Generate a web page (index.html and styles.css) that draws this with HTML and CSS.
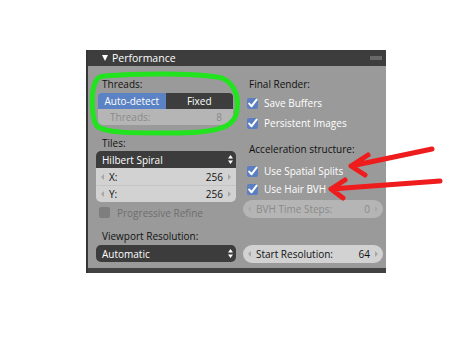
FILE: index.html
```html
<!DOCTYPE html>
<html>
<head>
<meta charset="utf-8">
<link rel="stylesheet" href="styles.css">
</head>
<body>
<div class="page">
  <div class="panel">
    <div class="header">
      <span class="tri"></span>
      <span class="title">Performance</span>
      <span class="grip"></span>
    </div>
    <div class="body">
      <div class="col">
        <div class="lbl mt11">Threads:</div>
        <div class="threads">
          <div class="toggle mt2">
            <div class="tg on">Auto-detect</div>
            <div class="tg">Fixed</div>
          </div>
          <div class="num dis bot">
            <span class="name">Threads:</span>
            <span class="val">8</span>
          </div>
        </div>
        <div class="lbl mt11">Tiles:</div>
        <div class="stack mt1">
          <div class="drop top">
            <span class="name">Hilbert Spiral</span>
            <svg class="ud" width="5" height="9" viewBox="0 0 5 9"><path d="M0 3.5 L2.5 0 L5 3.5 Z M0 5.5 L2.5 9 L5 5.5 Z" fill="#fff"/></svg>
          </div>
          <div class="num mid">
            <span class="arr l"></span><span class="name">X:</span><span class="val">256</span><span class="arr r"></span>
          </div>
          <div class="num bot sep">
            <span class="arr l"></span><span class="name">Y:</span><span class="val">256</span><span class="arr r"></span>
          </div>
        </div>
        <div class="check dis prog mt3 h15">
          <span class="box"></span><span>Progressive Refine</span>
        </div>
        <div class="lbl mt9">Viewport Resolution:</div>
        <div class="drop round mt2 h18">
          <span class="name">Automatic</span>
          <svg class="ud" width="5" height="9" viewBox="0 0 5 9"><path d="M0 3.5 L2.5 0 L5 3.5 Z M0 5.5 L2.5 9 L5 5.5 Z" fill="#fff"/></svg>
        </div>
      </div>
      <div class="col">
        <div class="lbl mt11">Final Render:</div>
        <div class="check mt2 h20">
          <span class="box on"><svg width="11" height="11" viewBox="0 0 11 11"><path d="M2.2 5.6 L4.6 8.2 L9.6 1.6" fill="none" stroke="#fff" stroke-width="2" stroke-linecap="round" stroke-linejoin="round"/></svg></span><span>Save Buffers</span>
        </div>
        <div class="check h20">
          <span class="box on"><svg width="11" height="11" viewBox="0 0 11 11"><path d="M2.2 5.6 L4.6 8.2 L9.6 1.6" fill="none" stroke="#fff" stroke-width="2" stroke-linecap="round" stroke-linejoin="round"/></svg></span><span>Persistent Images</span>
        </div>
        <div class="lbl mt9">Acceleration structure:</div>
        <div class="check mt6 h18">
          <span class="box on"><svg width="11" height="11" viewBox="0 0 11 11"><path d="M2.2 5.6 L4.6 8.2 L9.6 1.6" fill="none" stroke="#fff" stroke-width="2" stroke-linecap="round" stroke-linejoin="round"/></svg></span><span>Use Spatial Splits</span>
        </div>
        <div class="check h18">
          <span class="box on"><svg width="11" height="11" viewBox="0 0 11 11"><path d="M2.2 5.6 L4.6 8.2 L9.6 1.6" fill="none" stroke="#fff" stroke-width="2" stroke-linecap="round" stroke-linejoin="round"/></svg></span><span>Use Hair BVH</span>
        </div>
        <div class="num dis round mt2">
          <span class="arr l"></span><span class="name">BVH Time Steps:</span><span class="val">0</span><span class="arr r"></span>
        </div>
        <div class="num round mt27">
          <span class="arr l"></span><span class="name">Start Resolution:</span><span class="val">64</span><span class="arr r"></span>
        </div>
      </div>
    </div>
    <div class="footer"></div>
  </div>
  <svg class="marks" width="474" height="351" viewBox="0 0 474 351">
    <path d="M104 76 C140 73 200 73 222 78 C236 84 240 100 236 115 C232 128 215 133 170 133 C130 133 105 133 97 126 C91 118 91 92 95 83 C97 78 100 76 104 76 Z" fill="none" stroke="#22e41e" stroke-width="5"/>
    <path d="M432 149 L351 166 M368 155 L351 166 L365 175" fill="none" stroke="#ee1c1c" stroke-width="5" stroke-linecap="round" stroke-linejoin="round"/>
    <path d="M440 181 L331 189 M345 180 L331 189 L343 198" fill="none" stroke="#ee1c1c" stroke-width="5" stroke-linecap="round" stroke-linejoin="round"/>
  </svg>
</div>
</body>
</html>
```

FILE: styles.css
```css
body {
  margin: 0;
  background: #fff;
  font-family: "Open Sans", "Noto Sans", sans-serif;
  font-size: 10px;
}

.page {
  position: relative;
  width: 474px;
  height: 351px;
  padding-top: 50px;
  box-sizing: border-box;
}

.panel {
  margin-left: 86px;
  width: 300px;
  box-sizing: border-box;
  border-left: 2px solid #353535;
  background: #9a9a9a;
}

.header {
  height: 16px;
  background: #3d3d3d;
  display: flex;
  align-items: center;
  padding-left: 14px;
  color: #fff;
  font-size: 10.5px;
}

.tri {
  width: 0;
  height: 0;
  border-left: 3.5px solid transparent;
  border-right: 3.5px solid transparent;
  border-top: 6px solid #fff;
  margin-right: 4px;
}

.title {
  flex: 1;
}

.grip {
  width: 12px;
  height: 4px;
  margin-right: 4px;
  background-image: radial-gradient(circle, #6a6a6a 0.7px, transparent 0.9px);
  background-size: 2px 2px;
}

.body {
  display: grid;
  grid-template-columns: 140px 140px;
  column-gap: 7px;
  padding-left: 8px;
  height: 202px;
}

.footer {
  height: 5px;
  background: #424242;
}

.col {
  display: flex;
  flex-direction: column;
}

.mt1 { margin-top: 1px; }
.mt2 { margin-top: 2px; }
.mt3 { margin-top: 3px; }
.mt6 { margin-top: 6px; }
.mt9 { margin-top: 9px; }
.mt11 { margin-top: 11px; }
.mt27 { margin-top: 27px; }
.h15 { height: 15px; }
.h18 { height: 18px; }
.h20 { height: 20px; }

.lbl {
  height: 14px;
  line-height: 14px;
  color: #111;
  padding-left: 6px;
}

.threads {
  margin: 0 3px 0 2px;
  display: flex;
  flex-direction: column;
}

.toggle {
  display: flex;
  height: 16px;
  border-radius: 4px 4px 0 0;
  overflow: hidden;
}

.tg {
  flex: 1;
  display: flex;
  align-items: center;
  justify-content: center;
  background: #3d3d3d;
  color: #fff;
}

.tg.on {
  background: #5a82c4;
}

.num {
  display: flex;
  align-items: center;
  height: 17px;
  background: #d2d2d2;
  color: #111;
  padding: 0 5px;
}

.num .name {
  flex: 1;
  margin-left: 5px;
}

.num .val {
  margin-right: 5px;
}

.num.dis {
  background: #b5b5b5;
  color: #8a8a8a;
}

.threads .num {
  height: 16px;
  padding: 0 6px 0 7px;
}

.num.round {
  height: 18px;
  border-radius: 9px;
}

.arr {
  width: 0;
  height: 0;
  border-top: 3px solid transparent;
  border-bottom: 3px solid transparent;
}

.arr.l {
  border-right: 3px solid #a6a6a6;
}

.arr.r {
  border-left: 3px solid #a6a6a6;
}

.num.dis .arr.l {
  border-right-color: #a8a8a8;
}

.num.dis .arr.r {
  border-left-color: #a8a8a8;
}

.bot {
  border-radius: 0 0 5px 5px;
}

.sep {
  border-top: 1px solid #c4c4c4;
  height: 16px;
}

.stack {
  display: flex;
  flex-direction: column;
}

.drop {
  display: flex;
  align-items: center;
  height: 17px;
  background: #3c3c3c;
  color: #fff;
  padding: 0 3px 0 6px;
}

.drop .name {
  flex: 1;
}

.drop.top {
  border-radius: 5px 5px 0 0;
}

.drop.round {
  border-radius: 5px;
}

.check {
  display: flex;
  align-items: center;
  color: #fff;
  padding-left: 4px;
}

.check .box {
  width: 11px;
  height: 11px;
  border-radius: 2px;
  margin-right: 6px;
  display: flex;
}

.check .box.on {
  background: #5b7fc0;
}

.check.dis {
  color: #6e6e6e;
}

.check.prog {
  padding-left: 3px;
}

.check.dis .box {
  background: #7e7e7e;
  margin-right: 7px;
}

.marks {
  position: absolute;
  top: 0;
  left: 0;
  pointer-events: none;
}
```
